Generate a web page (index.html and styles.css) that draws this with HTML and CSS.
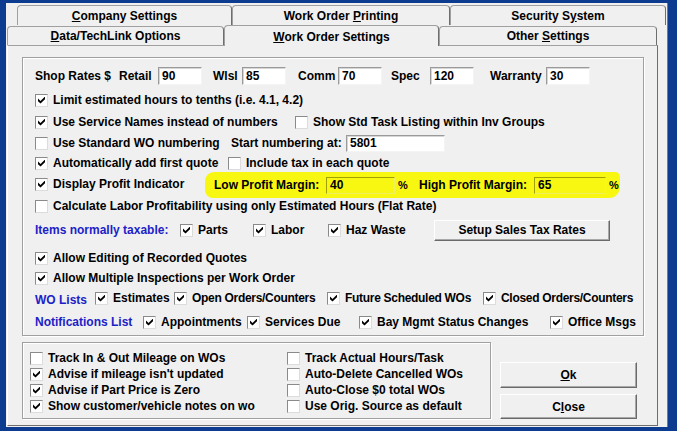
FILE: index.html
```html
<!DOCTYPE html>
<html>
<head>
<meta charset="utf-8">
<link rel="stylesheet" href="styles.css">
</head>
<body>
<div class="window">
  <div class="tabrow back">
    <div class="tab t1"><span><u>C</u>ompany Settings</span></div>
    <div class="tab t2"><span>Work Order <u>P</u>rinting</span></div>
    <div class="tab t3"><span>Security S<u>y</u>stem</span></div>
  </div>
  <div class="tabrow front">
    <div class="tab f1"><span><u>D</u>ata/TechLink Options</span></div>
    <div class="tab f2 active"><span><u>W</u>ork Order Settings</span></div>
    <div class="tab f3"><span>Other <u>S</u>ettings</span></div>
  </div>
  <div class="panel">
    <div class="group main">
      <div class="row">
        <span class="w84">Shop Rates $</span>
        <span class="w39">Retail</span>
        <span class="field fr">90</span>
        <span class="ml11 w29">Wlsl</span>
        <span class="field fr">85</span>
        <span class="ml12 w40">Comm</span>
        <span class="field fr">70</span>
        <span class="ml9 w39">Spec</span>
        <span class="field fr">120</span>
        <span class="ml16 w56">Warranty</span>
        <span class="field fr">30</span>
      </div>
      <div class="row mt4">
        <label class="chk"><span class="box on"></span>Limit estimated hours to tenths (i.e. 4.1, 4.2)</label>
      </div>
      <div class="row mt2">
        <label class="chk w260"><span class="box on"></span>Use Service Names instead of numbers</label>
        <label class="chk"><span class="box"></span>Show Std Task Listing within Inv Groups</label>
      </div>
      <div class="row mt1">
        <label class="chk w196"><span class="box"></span>Use Standard WO numbering</label>
        <span class="w115">Start numbering at:</span>
        <span class="field fnum">5801</span>
      </div>
      <div class="row">
        <label class="chk w193"><span class="box on"></span>Automatically add first quote</label>
        <label class="chk"><span class="box"></span>Include tax in each quote</label>
      </div>
      <div class="row mt1">
        <label class="chk w170"><span class="box on"></span>Display Profit Indicator</label>
        <div class="hl">
          <span class="w112">Low Profit Margin:</span>
          <span class="field fpm1">40</span>
          <span class="pct w20">%</span>
          <span class="w115">High Profit Margin:</span>
          <span class="field fpm2">65</span>
          <span class="pct">%</span>
        </div>
      </div>
      <div class="row mt2">
        <label class="chk"><span class="box"></span>Calculate Labor Profitability using only Estimated Hours (Flat Rate)</label>
      </div>
      <div class="row mt4">
        <span class="blue w145">Items normally taxable:</span>
        <label class="chk w73"><span class="box on"></span>Parts</label>
        <label class="chk w75"><span class="box on"></span>Labor</label>
        <label class="chk w106"><span class="box on"></span>Haz Waste</label>
        <span class="btn taxbtn">Setup Sales Tax Rates</span>
      </div>
      <div class="row mt8">
        <label class="chk"><span class="box on"></span>Allow Editing of Recorded Quotes</label>
      </div>
      <div class="row">
        <label class="chk"><span class="box on"></span>Allow Multiple Inspections per Work Order</label>
      </div>
      <div class="row">
        <span class="blue w60 low">WO Lists</span>
        <label class="chk w79"><span class="box on"></span>Estimates</label>
        <label class="chk w153"><span class="box on"></span><span class="tight">Open Orders/Counters</span></label>
        <label class="chk w156"><span class="box on"></span><span class="tight">Future Scheduled WOs</span></label>
        <label class="chk"><span class="box on"></span><span class="tight">Closed Orders/Counters</span></label>
      </div>
      <div class="row mt4">
        <span class="blue w108">Notifications List</span>
        <label class="chk w104"><span class="box on"></span>Appointments</label>
        <label class="chk w112"><span class="box on"></span>Services Due</label>
        <label class="chk w191"><span class="box on"></span>Bay Mgmt Status Changes</label>
        <label class="chk"><span class="box on"></span>Office Msgs</label>
      </div>
    </div>
    <div class="lower">
      <div class="group opts">
        <label class="chk"><span class="box"></span>Track In &amp; Out Mileage on WOs</label>
        <label class="chk"><span class="box"></span>Track Actual Hours/Task</label>
        <label class="chk"><span class="box on"></span>Advise if mileage isn't updated</label>
        <label class="chk"><span class="box"></span>Auto-Delete Cancelled WOs</label>
        <label class="chk"><span class="box on"></span>Advise if Part Price is Zero</label>
        <label class="chk"><span class="box"></span>Auto-Close $0 total WOs</label>
        <label class="chk"><span class="box on"></span>Show customer/vehicle notes on wo</label>
        <label class="chk"><span class="box"></span>Use Orig. Source as default</label>
      </div>
      <div class="buttons">
        <span class="btn ok"><span><u>O</u>k</span></span>
        <span class="btn cls"><span>C<u>l</u>ose</span></span>
      </div>
    </div>
  </div>
</div>
</body>
</html>
```

FILE: styles.css
```css
html, body {
  margin: 0;
}
body {
  box-sizing: border-box;
  width: 677px;
  height: 431px;
  padding: 3px 0 0 6px;
  overflow: hidden;
  background: #0d3b8f;
  font: bold 12px "Liberation Sans", Arial, sans-serif;
  color: #000;
}
.window {
  width: 661px;
  height: 424px;
  background: #f0f0f0;
  border-right: 1px solid #7a7a7a;
}

/* tabs */
.tabrow {
  display: flex;
  align-items: flex-end;
}
.tabrow.back {
  height: 22px;
  padding-left: 11px;
}
.tabrow.front {
  height: 20px;
  padding-left: 1px;
}
.tab {
  box-sizing: border-box;
  display: flex;
  align-items: center;
  justify-content: center;
  background: #f0f0f0;
  border: 1px solid #a0a0a0;
  border-right-color: #6e6e6e;
  border-bottom: none;
  border-radius: 4px 4px 0 0;
  white-space: nowrap;
}
.back .tab {
  height: 20px;
  padding-top: 1px;
}
.front .tab {
  height: 19px;
  padding-bottom: 1px;
}
.t1 { width: 215px; }
.t2 { width: 218px; }
.t3 { width: 216px; }
.f1 { width: 217px; }
.f2 { width: 215px; }
.f3 { width: 218px; }
.front .tab.active {
  position: relative;
  z-index: 2;
  height: 21px;
  margin-bottom: -1px;
  padding-bottom: 0;
  padding-top: 2px;
}

/* panel */
.panel {
  box-sizing: border-box;
  width: 651px;
  height: 381px;
  margin-left: 1px;
  padding: 11px 0 0 14px;
  border: 1px solid;
  border-color: #a0a0a0 #6e6e6e #6e6e6e #ffffff;
}
.group {
  box-sizing: border-box;
  border: 1px solid #a0a0a0;
  box-shadow: inset 1px 1px 0 #fff, 1px 1px 0 #fff;
}
.main {
  width: 622px;
  height: 279px;
  padding: 8px 0 0 12px;
}
.row {
  display: flex;
  align-items: center;
  height: 20px;
  white-space: nowrap;
}
.row > * { flex: none; }
.mt1 { margin-top: 1px; }
.mt2 { margin-top: 2px; }
.mt4 { margin-top: 4px; }
.mt8 { margin-top: 8px; }
.ml9 { margin-left: 9px; }
.ml11 { margin-left: 11px; }
.ml12 { margin-left: 12px; }
.ml16 { margin-left: 16px; }
.w20 { width: 20px; }
.w29 { width: 29px; }
.w39 { width: 39px; }
.w40 { width: 40px; }
.w56 { width: 56px; }
.w60 { width: 60px; }
.w73 { width: 73px; }
.w75 { width: 75px; }
.w79 { width: 79px; }
.w84 { width: 84px; }
.w104 { width: 104px; }
.w106 { width: 106px; }
.w108 { width: 108px; }
.w112 { width: 112px; }
.w115 { width: 115px; }
.w145 { width: 145px; }
.w153 { width: 153px; }
.w156 { width: 156px; }
.w170 { width: 170px; }
.w191 { width: 191px; }
.w193 { width: 193px; }
.w196 { width: 196px; }
.w260 { width: 260px; }

.blue { color: #1c22c8; }
.low { padding-top: 3px; }
.tight { letter-spacing: -0.3px; }

/* checkbox */
.chk {
  display: flex;
  align-items: center;
  gap: 5px;
  white-space: nowrap;
}
.box {
  box-sizing: border-box;
  flex: none;
  width: 13px;
  height: 13px;
  display: flex;
  align-items: center;
  justify-content: center;
  background: #fff;
  border: 1px solid;
  border-color: #8a8a8a #dcdcdc #dcdcdc #8a8a8a;
}
.box.on::after {
  content: "";
  width: 7px;
  height: 7px;
  background: #000;
  clip-path: polygon(0 29%, 36% 64%, 100% 0, 100% 40%, 36% 100%, 0 68%);
}

/* fields */
.field {
  box-sizing: border-box;
  display: flex;
  align-items: center;
  padding-left: 3px;
  background: #fff;
  border: 1px solid;
  border-color: #9a9a9a #f4f4f4 #f4f4f4 #9a9a9a;
  box-shadow: inset 1px 1px 0 #d6d6d6;
}
.fr { width: 44px; height: 18px; }
.fnum { width: 99px; height: 17px; }
.fpm1 { width: 69px; height: 17px; background: transparent; box-shadow: none; border-color: #a0a000 #f0f060 #f0f060 #a0a000; }
.fpm2 { width: 72px; height: 17px; background: transparent; box-shadow: none; border-color: #a0a000 #f0f060 #f0f060 #a0a000; }

/* highlight */
.hl {
  display: flex;
  align-items: center;
  height: 26px;
  padding: 0 0 0 9px;
  margin-top: 2px;
  background: #f7f712;
  border-radius: 9px 5px 11px 8px;
  white-space: nowrap;
}
.hl > * { flex: none; }
.pct {
  font-size: 11px;
  padding-left: 3px;
  padding-right: 1px;
}

/* buttons */
.btn {
  box-sizing: border-box;
  display: flex;
  align-items: center;
  justify-content: center;
  background: #f0f0f0;
  border: 1px solid;
  border-color: #ffffff #6a6a6a #6a6a6a #ffffff;
  box-shadow: inset -1px -1px 0 #a8a8a8;
  white-space: nowrap;
}
.taxbtn { width: 176px; height: 21px; }

.lower {
  display: flex;
  margin-top: 6px;
}
.opts {
  width: 469px;
  height: 77px;
  padding: 7px 0 0 7px;
  display: grid;
  grid-template-columns: 257px auto;
  grid-auto-rows: 16px;
}
.buttons {
  display: flex;
  flex-direction: column;
  gap: 6px;
  margin-left: 9px;
  padding-top: 20px;
}
.ok { width: 137px; height: 26px; }
.cls { width: 137px; height: 25px; }
```
